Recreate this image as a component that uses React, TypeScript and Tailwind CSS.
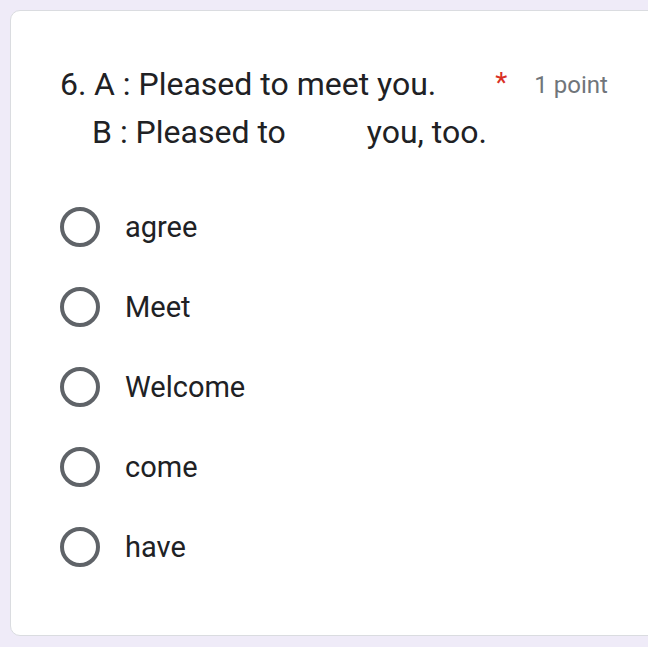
import React from "react";

const options = ["agree", "Meet", "Welcome", "come", "have"];

export default function App() {
  return (
    <div className="w-[648px] h-[647px] overflow-hidden bg-[#efebf8] pt-[10px] pl-[10px] font-['Roboto',sans-serif]">
      <div className="w-[660px] h-[626px] bg-white border border-[#dadce0] rounded-[10px] pl-[49px] pt-[49px]">
        {/* Question */}
        <div className="flex text-[32px] leading-[48px] text-[#202124]">
          <span className="w-[34px] shrink-0">6.</span>
          <div>
            <div className="flex items-start h-[48px]">
              <span>A : Pleased to meet you.</span>
              <span className="relative -top-[1px] ml-[59px] text-[#d93025] text-[28px] leading-[48px]">*</span>
              <span className="relative top-[1px] ml-[27px] text-[#70757a] text-[24px] leading-[48px]">1 point</span>
            </div>
            <div className="-ml-[2px]">
              B : Pleased to<span className="inline-block w-[81px]"></span>you, too.
            </div>
          </div>
        </div>

        {/* Options */}
        <div className="mt-[31px] flex flex-col">
          {options.map((opt) => (
            <div key={opt} className="flex items-center h-[80px]">
              <span className="w-[40px] h-[40px] rounded-full border-[4px] border-[#5f6368]" />
              <span className="ml-[25px] text-[29px] text-[#202124] leading-none">{opt}</span>
            </div>
          ))}
        </div>
      </div>
    </div>
  );
}
